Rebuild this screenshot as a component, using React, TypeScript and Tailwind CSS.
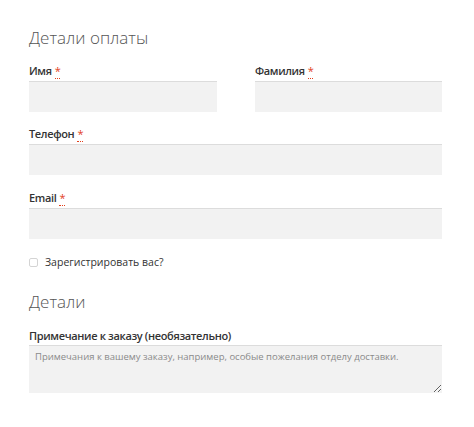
import React from 'react';

const Req: React.FC = () => (
    <abbr title="обязательно" className="text-[#e2401c] font-normal no-underline border-b border-dotted border-[#e2401c] ml-[3px] leading-none">*</abbr>
);

const Field: React.FC<{ label: string; required?: boolean; className?: string }> = ({ label, required, className }) => (
    <div className={className}>
        <label className="block text-[11px] font-semibold tracking-[-0.35px] text-[#333] leading-[16px] mb-[2px]">
            {label}
            {required && <Req />}
        </label>
        <input
            type="text"
            className="block w-full h-[31px] bg-[#f2f2f2] border-0 shadow-[inset_0_1px_0_#dcdcdc] outline-none px-2 text-[12px]"
        />
    </div>
);

const App: React.FC = () => {
    return (
        <div className="w-[474px] h-[427px] bg-white pt-[26px] px-[29px] font-['Open_Sans',sans-serif]">
            <div className="w-[413px]">
                <h3 className="text-[17px] font-light text-[#555] leading-[24px] mb-[13px]">Детали оплаты</h3>

                <div className="flex gap-[38px] mb-[14px]">
                    <Field label="Имя" required className="w-[188px]" />
                    <Field label="Фамилия" required className="w-[187px]" />
                </div>

                <Field label="Телефон" required className="mb-[15px]" />
                <Field label="Email" required className="mb-[15px]" />

                <label className="flex items-center gap-[7px] text-[10.5px] text-[#333] leading-[16px]">
                    <input type="checkbox" className="w-[9px] h-[9px] appearance-none border border-[#d4d4d4] rounded-[2px] bg-white" />
                    Зарегистрировать вас?
                </label>

                <h3 className="text-[17px] font-light text-[#555] leading-[24px] mt-[20px] mb-[14px]">Детали</h3>

                <label className="block text-[11px] font-semibold tracking-[-0.35px] text-[#333] leading-[16px] mb-[1px]">
                    Примечание к заказу (необязательно)
                </label>
                <textarea
                    placeholder="Примечания к вашему заказу, например, особые пожелания отделу доставки."
                    className="block w-full h-[48px] bg-[#f2f2f2] border-0 shadow-[inset_0_1px_0_#dcdcdc] outline-none px-[6px] py-[4px] text-[9.5px] leading-[16px] text-[#333] placeholder:text-[#8a8a8a] resize"
                />
            </div>
        </div>
    );
};

export default App;
